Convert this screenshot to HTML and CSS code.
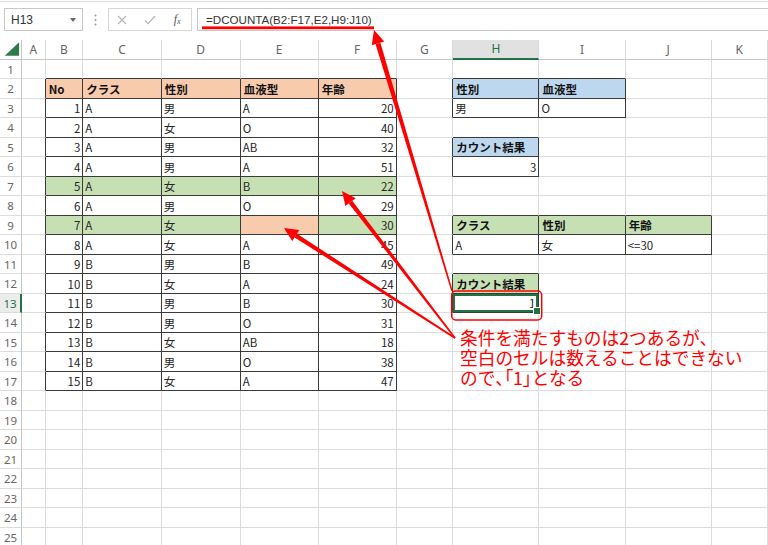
FILE: index.html
```html
<!DOCTYPE html>
<html lang="ja">
<head>
<meta charset="utf-8">
<title>DCOUNTA</title>
<link rel="stylesheet" href="styles.css">
</head>
<body>
<div class="top"></div>
<div class="fbar">
  <div class="namebox"><span>H13</span><span class="dd"></span></div>
  <div class="dots"><svg width="3" height="12" viewBox="0 0 3 12"><circle cx="1.5" cy="1.5" r="1" fill="#9a9a9a"/><circle cx="1.5" cy="6" r="1" fill="#9a9a9a"/><circle cx="1.5" cy="10.5" r="1" fill="#9a9a9a"/></svg></div>
  <div class="btns">
    <span class="btn"><svg width="10" height="10" viewBox="0 0 10 10"><path d="M1 1L9 9M9 1L1 9" stroke="#b4b4b4" stroke-width="1.2" fill="none"/></svg></span>
    <span class="btn"><svg width="12" height="10" viewBox="0 0 12 10"><path d="M1 5.5L4.2 8.6L11 1" stroke="#b4b4b4" stroke-width="1.2" fill="none"/></svg></span>
    <span class="btn fx">f<small>x</small></span>
  </div>
  <div class="formula">=DCOUNTA(B2:F17,E2,H9:J10)</div>
</div>
<div class="sp"></div>
<div class="sheet">
  <div class="ch corner"><svg width="22" height="20" viewBox="0 0 22 20"><path d="M5 17H20V3Z" fill="#2f7b46"/></svg></div>
  <div class="ch">A</div><div class="ch">B</div><div class="ch">C</div><div class="ch">D</div><div class="ch">E</div><div class="ch">F</div><div class="ch">G</div><div class="ch csel">H</div><div class="ch">I</div><div class="ch">J</div><div class="ch">K</div>

  <div class="rh">1</div><div class="c"></div><div class="c d"></div><div class="c d"></div><div class="c d"></div><div class="c d"></div><div class="c d"></div><div class="c"></div><div class="c d"></div><div class="c d"></div><div class="c"></div><div class="c"></div>

  <div class="rh">2</div><div class="c r"></div><div class="c bx pe b">No</div><div class="c bx pe b">クラス</div><div class="c bx pe b">性別</div><div class="c bx pe b">血液型</div><div class="c bx pe b">年齢</div><div class="c r"></div><div class="c bx bl b">性別</div><div class="c bx bl b">血液型</div><div class="c"></div><div class="c"></div>

  <div class="rh">3</div><div class="c r"></div><div class="c bx n">1</div><div class="c bx">A</div><div class="c bx">男</div><div class="c bx">A</div><div class="c bx n">20</div><div class="c r"></div><div class="c bx">男</div><div class="c bx">O</div><div class="c"></div><div class="c"></div>

  <div class="rh">4</div><div class="c r"></div><div class="c bx n">2</div><div class="c bx">A</div><div class="c bx">女</div><div class="c bx">O</div><div class="c bx n">40</div><div class="c"></div><div class="c d"></div><div class="c"></div><div class="c"></div><div class="c"></div>

  <div class="rh">5</div><div class="c r"></div><div class="c bx n">3</div><div class="c bx">A</div><div class="c bx">男</div><div class="c bx">AB</div><div class="c bx n">32</div><div class="c r"></div><div class="c bx bl b">カウント結果</div><div class="c"></div><div class="c"></div><div class="c"></div>

  <div class="rh">6</div><div class="c r"></div><div class="c bx n">4</div><div class="c bx">A</div><div class="c bx">男</div><div class="c bx">A</div><div class="c bx n">51</div><div class="c r"></div><div class="c bx n">3</div><div class="c"></div><div class="c"></div><div class="c"></div>

  <div class="rh">7</div><div class="c r"></div><div class="c bx gr n">5</div><div class="c bx gr">A</div><div class="c bx gr">女</div><div class="c bx gr">B</div><div class="c bx gr n">22</div><div class="c"></div><div class="c"></div><div class="c"></div><div class="c"></div><div class="c"></div>

  <div class="rh">8</div><div class="c r"></div><div class="c bx n">6</div><div class="c bx">A</div><div class="c bx">男</div><div class="c bx">O</div><div class="c bx n">29</div><div class="c"></div><div class="c d"></div><div class="c d"></div><div class="c d"></div><div class="c"></div>

  <div class="rh">9</div><div class="c r"></div><div class="c bx gr n">7</div><div class="c bx gr">A</div><div class="c bx gr">女</div><div class="c bx pe"></div><div class="c bx gr n">30</div><div class="c r"></div><div class="c bx gr b">クラス</div><div class="c bx gr b">性別</div><div class="c bx gr b">年齢</div><div class="c"></div>

  <div class="rh">10</div><div class="c r"></div><div class="c bx n">8</div><div class="c bx">A</div><div class="c bx">女</div><div class="c bx">A</div><div class="c bx n">45</div><div class="c r"></div><div class="c bx">A</div><div class="c bx">女</div><div class="c bx">&lt;=30</div><div class="c"></div>

  <div class="rh">11</div><div class="c r"></div><div class="c bx n">9</div><div class="c bx">B</div><div class="c bx">男</div><div class="c bx">B</div><div class="c bx n">49</div><div class="c"></div><div class="c d"></div><div class="c"></div><div class="c"></div><div class="c"></div>

  <div class="rh">12</div><div class="c r"></div><div class="c bx n">10</div><div class="c bx">B</div><div class="c bx">女</div><div class="c bx">A</div><div class="c bx n">24</div><div class="c r"></div><div class="c bx gr b">カウント結果</div><div class="c"></div><div class="c"></div><div class="c"></div>

  <div class="rh rsel">13</div><div class="c r"></div><div class="c bx n">11</div><div class="c bx">B</div><div class="c bx">男</div><div class="c bx">B</div><div class="c bx n">30</div><div class="c r"></div><div class="c bx n sel">1</div><div class="c"></div><div class="c"></div><div class="c"></div>

  <div class="rh">14</div><div class="c r"></div><div class="c bx n">12</div><div class="c bx">B</div><div class="c bx">男</div><div class="c bx">O</div><div class="c bx n">31</div><div class="c"></div><div class="c"></div><div class="c"></div><div class="c"></div><div class="c"></div>

  <div class="rh">15</div><div class="c r"></div><div class="c bx n">13</div><div class="c bx">B</div><div class="c bx">女</div><div class="c bx">AB</div><div class="c bx n">18</div><div class="c"></div><div class="c"></div><div class="c"></div><div class="c"></div><div class="c"></div>

  <div class="rh">16</div><div class="c r"></div><div class="c bx n">14</div><div class="c bx">B</div><div class="c bx">男</div><div class="c bx">O</div><div class="c bx n">38</div><div class="c"></div><div class="c"></div><div class="c"></div><div class="c"></div><div class="c"></div>

  <div class="rh">17</div><div class="c r"></div><div class="c bx n">15</div><div class="c bx">B</div><div class="c bx">女</div><div class="c bx">A</div><div class="c bx n">47</div><div class="c"></div><div class="c"></div><div class="c"></div><div class="c"></div><div class="c"></div>

  <div class="rh">18</div><div class="c"></div><div class="c"></div><div class="c"></div><div class="c"></div><div class="c"></div><div class="c"></div><div class="c"></div><div class="c"></div><div class="c"></div><div class="c"></div><div class="c"></div>
  <div class="rh">19</div><div class="c"></div><div class="c"></div><div class="c"></div><div class="c"></div><div class="c"></div><div class="c"></div><div class="c"></div><div class="c"></div><div class="c"></div><div class="c"></div><div class="c"></div>
  <div class="rh">20</div><div class="c"></div><div class="c"></div><div class="c"></div><div class="c"></div><div class="c"></div><div class="c"></div><div class="c"></div><div class="c"></div><div class="c"></div><div class="c"></div><div class="c"></div>
  <div class="rh">21</div><div class="c"></div><div class="c"></div><div class="c"></div><div class="c"></div><div class="c"></div><div class="c"></div><div class="c"></div><div class="c"></div><div class="c"></div><div class="c"></div><div class="c"></div>
  <div class="rh">22</div><div class="c"></div><div class="c"></div><div class="c"></div><div class="c"></div><div class="c"></div><div class="c"></div><div class="c"></div><div class="c"></div><div class="c"></div><div class="c"></div><div class="c"></div>
  <div class="rh">23</div><div class="c"></div><div class="c"></div><div class="c"></div><div class="c"></div><div class="c"></div><div class="c"></div><div class="c"></div><div class="c"></div><div class="c"></div><div class="c"></div><div class="c"></div>
  <div class="rh">24</div><div class="c"></div><div class="c"></div><div class="c"></div><div class="c"></div><div class="c"></div><div class="c"></div><div class="c"></div><div class="c"></div><div class="c"></div><div class="c"></div><div class="c"></div>
  <div class="rh">25</div><div class="c"></div><div class="c"></div><div class="c"></div><div class="c"></div><div class="c"></div><div class="c"></div><div class="c"></div><div class="c"></div><div class="c"></div><div class="c"></div><div class="c"></div>
</div>

<svg class="ovl" width="768" height="545" viewBox="0 0 768 545">
  <rect x="202" y="26.4" width="172" height="2.8" fill="#ff0000"/>
  <polygon points="452.67,290.8 380.41,42.69 375.61,44.13 451.33,291.2" fill="#ff0000"/>
  <polygon points="374,30 384.24,41.55 371.78,45.27" fill="#ff0000"/>
  <polygon points="455.63,337.51 352.27,200.76 348.79,203.44 454.37,338.49" fill="#ff0000"/>
  <polygon points="342,191 355.68,198.14 345.38,206.06" fill="#ff0000"/>
  <polygon points="455.43,337.33 296.97,233.72 294.59,237.42 454.57,338.67" fill="#ff0000"/>
  <polygon points="284,228 299.3,230.1 292.26,241.04" fill="#ff0000"/>
  <rect x="451.7" y="291" width="90" height="29" rx="4" ry="4" fill="none" stroke="#ff0000" stroke-width="1.5"/>
</svg>

<div class="note">
  <div class="ln">条件を満たすものは2つあるが、</div>
  <div class="ln">空白のセルは数えることはできない</div>
  <div class="ln">ので<span class="pp">、「</span>1<span class="pp">」</span>となる</div>
</div>
</body>
</html>
```

FILE: styles.css
```css
* { box-sizing: border-box; }
html, body { margin: 0; padding: 0; }
body {
  width: 768px;
  height: 545px;
  overflow: hidden;
  position: relative;
  background: #fff;
  font-family: "Noto Sans CJK JP", "Noto Sans", sans-serif;
}

.top {
  border-top: 1px solid #dadada;
  margin-top: 1px;
  height: 7px;
}

.fbar {
  display: flex;
  height: 23px;
}
.namebox {
  margin-left: 4px;
  width: 79px;
  border: 1px solid #c8c8c8;
  display: flex;
  align-items: center;
  padding: 0 6px 0 6px;
  font: 12px "Liberation Sans", Arial, sans-serif;
  color: #333;
}
.dd {
  margin-left: auto;
  width: 0;
  height: 0;
  border-left: 3.5px solid transparent;
  border-right: 3.5px solid transparent;
  border-top: 4px solid #666;
}
.dots {
  width: 25px;
  display: flex;
  align-items: center;
  justify-content: center;
}
.btns {
  width: 84px;
  border: 1px solid #d6d6d6;
  display: flex;
  align-items: center;
}
.btn {
  width: 28px;
  display: flex;
  justify-content: center;
  align-items: center;
}
.btns .btn:first-child { margin-left: -1px; }
.fx {
  font: italic 12px "Liberation Serif", serif;
  color: #555;
}
.fx small { font-size: 8px; margin-top: 4px; }
.formula {
  flex: 1;
  margin-left: 5px;
  border: 1px solid #c8c8c8;
  border-right: none;
  display: flex;
  align-items: center;
  padding-left: 8px;
  font: 11.6px "Liberation Sans", Arial, sans-serif;
  color: #333;
}
.sp { height: 9px; }

.sheet {
  display: grid;
  grid-template-columns: 22px 23.7px 37.6px 78.4px 79px 78px 78px 56.6px 86.2px 86.2px 86px 56.3px;
  grid-template-rows: 19.8px repeat(25, 19.5px);
}

.ch {
  border-right: 1px solid #d8d8d8;
  border-bottom: 1px solid #c6c6c6;
  display: flex;
  align-items: center;
  justify-content: center;
  font: 12px "Noto Sans", sans-serif;
  color: #666;
}
.corner { border-right: 1px solid #c6c6c6; }
.corner svg { display: block; }
.csel {
  background: #e1e1e1;
  color: #217346;
  border-bottom: 2px solid #217346;
}

.rh {
  border-right: 1px solid #c6c6c6;
  border-bottom: 1px solid #dcdcdc;
  display: flex;
  align-items: center;
  justify-content: center;
  font: 11.5px "Noto Sans", sans-serif;
  color: #666;
}
.rsel {
  color: #217346;
  background: #ececec;
  border-right: 2px solid #217346;
}

.c {
  border-right: 1px solid #dcdcdc;
  border-bottom: 1px solid #dcdcdc;
  display: flex;
  align-items: center;
  padding: 0 2px 0 2px;
  font-size: 11.5px;
  color: #262626;
  white-space: nowrap;
  overflow: hidden;
}
.c.r { border-right-color: #3a3a3a; }
.c.d { border-bottom-color: #3a3a3a; }
.c.bx {
  border-right-color: #3a3a3a;
  border-bottom-color: #3a3a3a;
}
.c.n { justify-content: flex-end; }
.c.b { font-weight: 700; color: #111; padding-left: 3px; }
.pe { background: #f8cbad; }
.gr { background: #c6e0b4; }
.bl { background: #bdd7ee; }

.sel {
  position: relative;
  overflow: visible;
  box-shadow: inset 0 0 0 2px #217346;
  padding-right: 3px;
}
.sel::after {
  content: "";
  position: absolute;
  right: -3px;
  bottom: -3px;
  width: 6px;
  height: 6px;
  background: #217346;
  border: 1px solid #fff;
}

.ovl {
  position: absolute;
  left: 0;
  top: 0;
  pointer-events: none;
}

.note {
  position: absolute;
  left: 460px;
  top: 327px;
  color: #ff0000;
  font-family: "Noto Sans CJK JP", sans-serif;
  font-size: 17.7px;
  white-space: nowrap;
}
.ln {
  height: 20.2px;
  line-height: 20.2px;
}
.pp { font-feature-settings: "palt" 1; }
```
